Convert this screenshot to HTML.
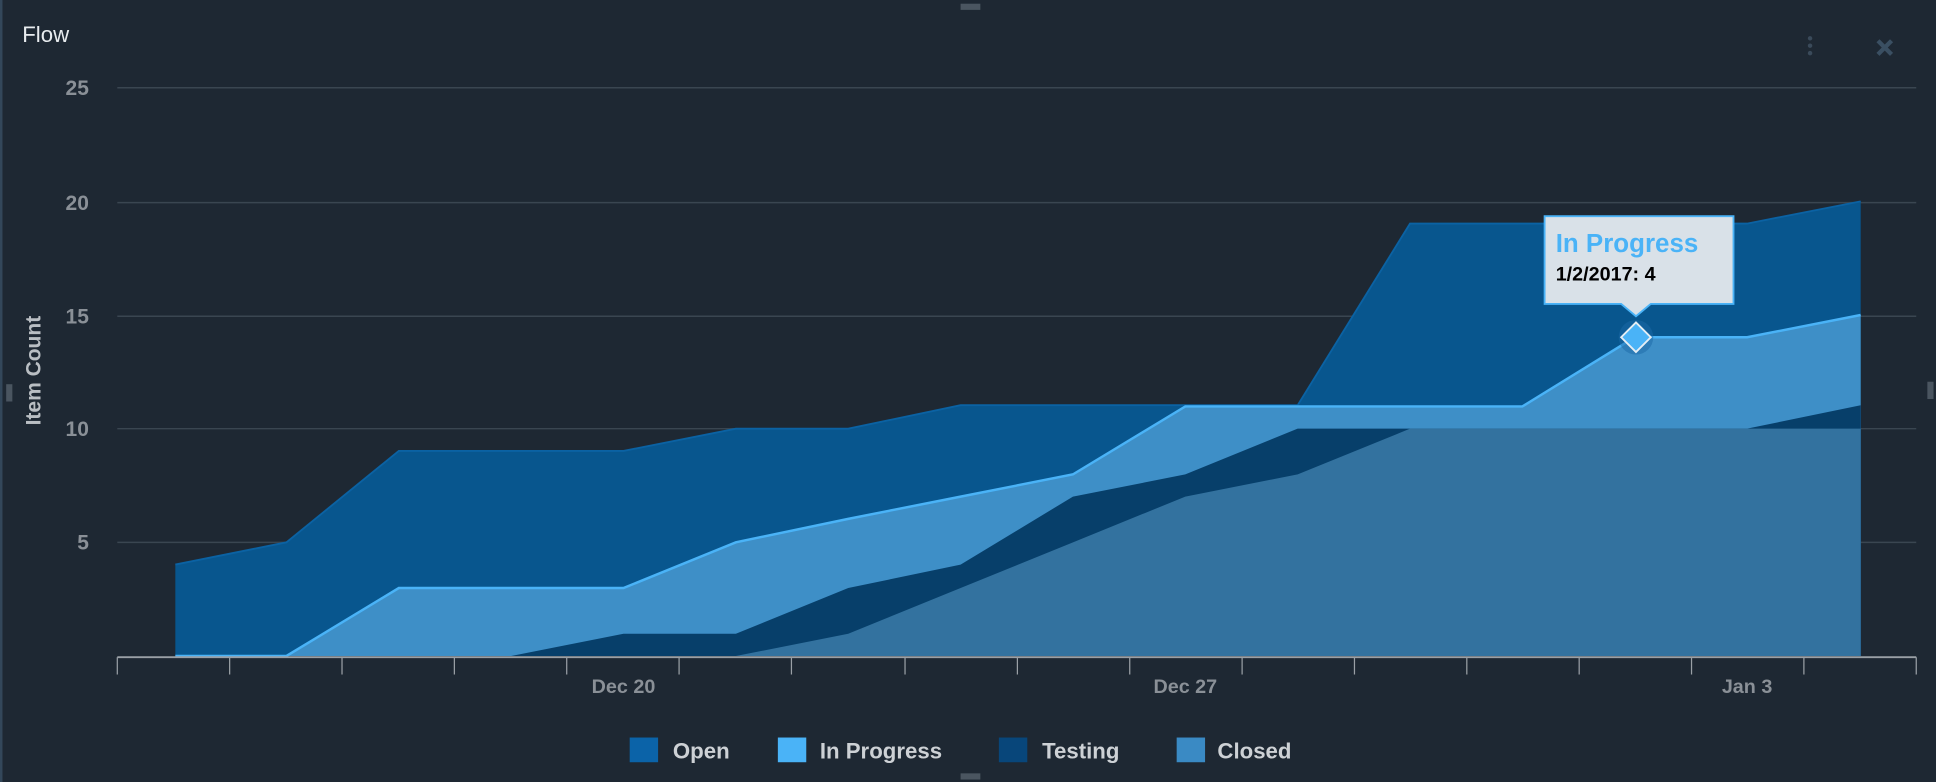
<!DOCTYPE html>
<html><head><meta charset="utf-8"><style>
html,body{margin:0;padding:0;background:#1e2833;width:1936px;height:782px;overflow:hidden}
svg{display:block}
text{font-family:"Liberation Sans",sans-serif}
</style></head><body>
<svg width="1936" height="782" viewBox="0 0 1568 633" preserveAspectRatio="none" xmlns="http://www.w3.org/2000/svg">
<rect width="1568" height="633" fill="#1e2833"/>
<rect x="0" y="0" width="2" height="633" fill="#33475a"/>
<text x="18" y="34" font-size="18" fill="#e8ecef">Flow</text>
<g stroke="#3a4651" stroke-width="1.2">
<line x1="95" y1="71" x2="1552" y2="71"/>
<line x1="95" y1="164" x2="1552" y2="164"/>
<line x1="95" y1="256" x2="1552" y2="256"/>
<line x1="95" y1="347" x2="1552" y2="347"/>
<line x1="95" y1="439" x2="1552" y2="439"/>
</g>
<g font-size="17" font-weight="bold" fill="#8a9097" text-anchor="end">
<text x="72" y="77">25</text><text x="72" y="170">20</text><text x="72" y="262">15</text><text x="72" y="353">10</text><text x="72" y="445">5</text>
</g>
<text transform="translate(33,300) rotate(-90)" font-size="17" font-weight="bold" fill="#b9bec3" text-anchor="middle">Item Count</text>
<polygon fill="#08568e" points="142,531 142,457 232,439 323,365 414,365 505,365 596,347 687,347 778,328 869,328 960,328 1051,328 1142,181 1233,181 1324,181 1415,181 1507,163 1507,531"/>
<polyline fill="none" stroke="#0b62a3" stroke-width="1.5" points="142,457 232,439 323,365 414,365 505,365 596,347 687,347 778,328 869,328 960,328 1051,328 1142,181 1233,181 1324,181 1415,181 1507,163"/>
<polygon fill="#3e8fc7" points="142,531 232,531 323,476 414,476 505,476 596,439 687,420 778,402 869,384 960,329 1051,329 1142,329 1233,329 1324,273 1415,273 1507,255 1507,531"/>
<polygon fill="#073f6a" points="414,531 505,513 596,513 687,476 778,457 869,402 960,384 1051,347 1142,347 1233,347 1324,347 1415,347 1507,328 1507,531"/>
<polygon fill="#33729f" points="596,531 687,513 778,476 869,439 960,402 1051,384 1142,347 1233,347 1324,347 1415,347 1507,347 1507,531"/>
<polyline fill="none" stroke="#4ab3f7" stroke-width="2" points="142,531 232,531 323,476 414,476 505,476 596,439 687,420 778,402 869,384 960,329 1051,329 1142,329 1233,329 1324,273 1415,273 1507,255"/>
<line x1="95" y1="532" x2="1552" y2="532" stroke="#9aa0a6" stroke-width="1.5"/>
<g stroke="#9aa0a6" stroke-width="1">
<line x1="95" y1="532" x2="95" y2="546"/><line x1="186" y1="532" x2="186" y2="546"/><line x1="277" y1="532" x2="277" y2="546"/><line x1="368" y1="532" x2="368" y2="546"/><line x1="459" y1="532" x2="459" y2="546"/><line x1="550" y1="532" x2="550" y2="546"/><line x1="641" y1="532" x2="641" y2="546"/><line x1="733" y1="532" x2="733" y2="546"/><line x1="824" y1="532" x2="824" y2="546"/><line x1="915" y1="532" x2="915" y2="546"/><line x1="1006" y1="532" x2="1006" y2="546"/><line x1="1097" y1="532" x2="1097" y2="546"/><line x1="1188" y1="532" x2="1188" y2="546"/><line x1="1279" y1="532" x2="1279" y2="546"/><line x1="1370" y1="532" x2="1370" y2="546"/><line x1="1461" y1="532" x2="1461" y2="546"/><line x1="1552" y1="532" x2="1552" y2="546"/>
</g>
<g font-size="16" font-weight="bold" fill="#8a9097" text-anchor="middle">
<text x="505" y="561">Dec 20</text><text x="960" y="561">Dec 27</text><text x="1415" y="561">Jan 3</text>
</g>
<circle cx="1325" cy="273" r="14" fill="#1c6aa8" opacity="0.5"/>
<polygon points="1325,261 1337,273 1325,285 1313,273" fill="#4ab3f7" stroke="#e6eef4" stroke-width="1.5"/>
<path d="M1251,175 H1404 V246 H1337 L1325,256 L1313,246 H1251 Z" fill="#d9e1e8" stroke="#4ab3f7" stroke-width="1.5"/>
<text x="1260" y="204" font-size="21" font-weight="bold" fill="#4ab3f7">In Progress</text>
<text x="1260" y="227" font-size="16" font-weight="bold" fill="#000">1/2/2017: 4</text>
<g fill="#3a4a5a"><circle cx="1466" cy="31" r="1.8"/><circle cx="1466" cy="37" r="1.8"/><circle cx="1466" cy="43" r="1.8"/></g>
<path d="M1521,33 L1532,44 M1532,33 L1521,44" stroke="#3a4f62" stroke-width="3.5"/>
<g font-size="18" font-weight="bold" fill="#cdd1d5">
<rect x="510" y="597" width="23" height="20" fill="#0b63a8"/><text x="545" y="614">Open</text>
<rect x="630" y="597" width="23" height="20" fill="#4ab3f7"/><text x="664" y="614">In Progress</text>
<rect x="809" y="597" width="23" height="20" fill="#08467a"/><text x="844" y="614">Testing</text>
<rect x="953" y="597" width="23" height="20" fill="#3a8ac4"/><text x="986" y="614">Closed</text>
</g>
<g fill="#4a5560"><rect x="778" y="3" width="16" height="5"/><rect x="778" y="626" width="16" height="5"/><rect x="5" y="311" width="5" height="14"/><rect x="1561" y="309" width="5" height="14"/></g>
</svg>
</body></html>
